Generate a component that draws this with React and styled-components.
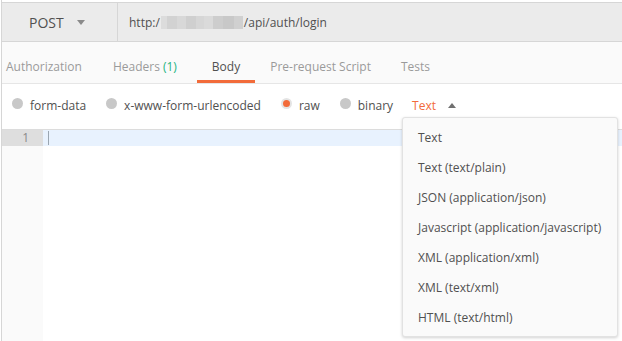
import React from 'react';
import styled, { createGlobalStyle } from 'styled-components';

const GlobalStyle = createGlobalStyle`
  html, body {
    margin: 0;
    padding: 0;
    background: #fff;
  }
  body {
    font-family: "Open Sans", "Noto Sans", sans-serif;
    font-size: 12px;
    color: #505050;
  }
`;

const Page = styled.div`
  width: 621px;
  height: 341px;
  margin-left: 1px;
  border-left: 1px solid #d6d6d6;
  box-sizing: border-box;
  display: flex;
  flex-direction: column;
  padding-top: 2px;
  overflow: hidden;
`;

const UrlBar = styled.div`
  display: flex;
  height: 40px;
  box-sizing: border-box;
  background: #ebebeb;
  border-top: 1px solid #d6d6d6;
  border-bottom: 1px solid #d6d6d6;
`;

const Method = styled.div`
  width: 116px;
  border-right: 1px solid #d6d6d6;
  display: flex;
  align-items: center;
  padding-left: 27px;
  box-sizing: border-box;
  font-size: 14px;
  color: #505050;
  gap: 13px;
`;

const Caret = styled.span`
  width: 0;
  height: 0;
  border-left: 4px solid transparent;
  border-right: 4px solid transparent;
  border-${(p) => (p.$up ? 'bottom' : 'top')}: 5px solid ${(p) => p.$color || '#8a8a8a'};
`;

const Url = styled.div`
  display: flex;
  align-items: center;
  padding-left: 11px;
  font-size: 12px;
  color: #505050;
`;

const Blur = styled.span`
  display: inline-flex;
  height: 13px;
  margin: 0 1px;
`;

const BlurCell = styled.span`
  display: block;
  height: 100%;
  width: ${(p) => p.$w}px;
  background: ${(p) => p.$c};
`;

const Tabs = styled.div`
  display: flex;
  height: 42px;
  box-sizing: border-box;
  background: #fafafa;
  border-bottom: 1px solid #e6e6e6;
  padding-left: 4px;
`;

const Tab = styled.div`
  position: relative;
  display: flex;
  align-items: center;
  padding: 8px 15px 0;
  margin-left: ${(p) => p.$ml || 0}px;
  color: ${(p) => (p.$active ? '#505050' : '#9a9a9a')};
  font-size: 12px;
  &:first-child {
    padding-left: 0;
  }
  &::after {
    content: '';
    display: ${(p) => (p.$active ? 'block' : 'none')};
    position: absolute;
    left: 0;
    right: 0;
    bottom: 0;
    height: 3px;
    background: #f26b3a;
  }
`;

const Count = styled.span`
  color: #26b47f;
  margin-left: 3px;
`;

const Options = styled.div`
  position: relative;
  display: flex;
  align-items: center;
  height: 45px;
  padding: 0 0 2px 10px;
  box-sizing: border-box;
`;

const Option = styled.label`
  display: flex;
  align-items: center;
  gap: 7px;
  margin-right: 20px;
  font-size: 12px;
  color: #505050;
`;

const Radio = styled.span`
  width: 11px;
  height: 11px;
  border-radius: 50%;
  box-sizing: border-box;
  margin-top: -5px;
  background: ${(p) => (p.$on ? '#f26b3a' : '#c8c8c8')};
  border: ${(p) => (p.$on ? '2px solid #e4e4e4' : 'none')};
`;

const TypeSelect = styled.div`
  display: flex;
  align-items: center;
  gap: 12px;
  margin-left: -1px;
  color: #f26b3a;
  font-size: 12px;
`;

const Menu = styled.ul`
  position: absolute;
  left: 400px;
  top: 33px;
  width: 214px;
  margin: 0;
  padding: 5px 0 3px;
  list-style: none;
  background: #fafafa;
  border: 1px solid #e2e2e2;
  border-radius: 3px;
  box-shadow: 0 1px 3px rgba(0, 0, 0, 0.18);
  z-index: 2;
`;

const MenuItem = styled.li`
  height: 30px;
  line-height: 30px;
  padding-left: 15px;
  font-size: 12px;
  color: #505050;
  white-space: nowrap;
`;

const Editor = styled.div`
  flex: 1;
  display: flex;
  flex-direction: column;
  border-top: 1px solid #dcdcdc;
  background: linear-gradient(to right, #fafafa 0 41px, #fff 41px);
`;

const Line = styled.div`
  display: flex;
  height: 16px;
  background: ${(p) => (p.$active ? '#e8f2fe' : 'transparent')};
`;

const Gutter = styled.div`
  width: 41px;
  box-sizing: border-box;
  padding-right: 14px;
  text-align: right;
  font-size: 12px;
  line-height: 16px;
  color: #8a8a8a;
  background: ${(p) => (p.$active ? '#dedede' : 'transparent')};
`;

const Cursor = styled.span`
  width: 1px;
  height: 14px;
  margin: 1px 0 0 5px;
  background: #9aa6b2;
`;

const blur = [
  [6, '#dcdcdc'], [10, '#d2d2d2'], [9, '#d8d8d8'], [10, '#cfcfcf'],
  [8, '#d6d6d6'], [9, '#dadada'], [10, '#cdcdcd'], [11, '#c8c8c8'], [9, '#d0d0d0'],
];

const types = [
  'Text',
  'Text (text/plain)',
  'JSON (application/json)',
  'Javascript (application/javascript)',
  'XML (application/xml)',
  'XML (text/xml)',
  'HTML (text/html)',
];

export default function App() {
  return (
    <>
      <GlobalStyle />
      <Page>
        <UrlBar>
          <Method>
            POST <Caret />
          </Method>
          <Url>
            http:/
            <Blur>
              {blur.map(([w, c], i) => (
                <BlurCell key={i} $w={w} $c={c} />
              ))}
            </Blur>
            /api/auth/login
          </Url>
        </UrlBar>
        <Tabs>
          <Tab>Authorization</Tab>
          <Tab $ml={1}>
            Headers<Count>(1)</Count>
          </Tab>
          <Tab $active $ml={5}>Body</Tab>
          <Tab>Pre-request Script</Tab>
          <Tab>Tests</Tab>
        </Tabs>
        <Options>
          <Option><Radio />form-data</Option>
          <Option><Radio />x-www-form-urlencoded</Option>
          <Option><Radio $on />raw</Option>
          <Option><Radio />binary</Option>
          <TypeSelect>
            Text <Caret $up $color="#707070" />
          </TypeSelect>
          <Menu>
            {types.map((t) => (
              <MenuItem key={t}>{t}</MenuItem>
            ))}
          </Menu>
        </Options>
        <Editor>
          <Line $active>
            <Gutter $active>1</Gutter>
            <Cursor />
          </Line>
        </Editor>
      </Page>
    </>
  );
}
